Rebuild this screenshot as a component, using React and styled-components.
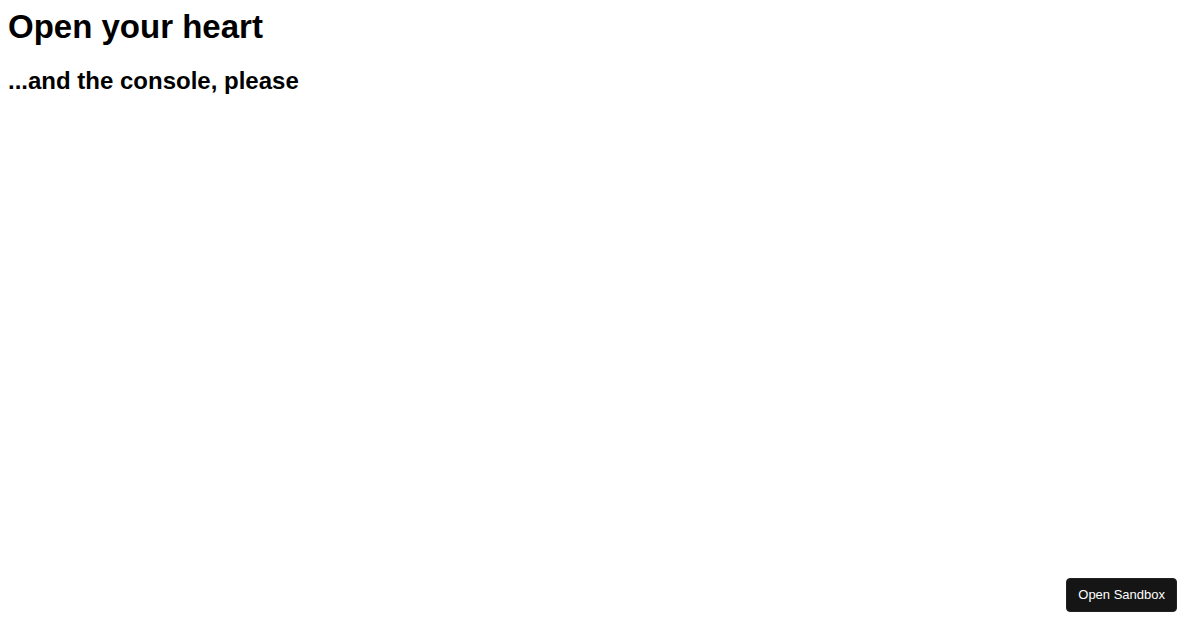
import React from 'react';
import styled, { createGlobalStyle } from 'styled-components';

const App = () => {
  return (
    <>
      <GlobalStyle />
      <main>
        <Title>Open your heart</Title>
        <Subtitle>...and the console, please</Subtitle>
      </main>
      <SandboxButton type="button">Open Sandbox</SandboxButton>
    </>
  );
};

const GlobalStyle = createGlobalStyle`
  body {
    margin: 8px;
    background: #fff;
    color: #000;
    font-family: "Liberation Sans", Arial, sans-serif;
  }
`;

const Title = styled.h1`
  margin: 0 0 20px;
  font-size: 33px;
  line-height: 37px;
`;

const Subtitle = styled.h2`
  margin: 0;
  font-size: 24px;
  line-height: 32px;
`;

const SandboxButton = styled.button`
  position: fixed;
  right: 23px;
  bottom: 18px;
  padding: 8px 11px;
  border: 1px solid #222;
  border-radius: 4px;
  background: #151515;
  color: #fff;
  font-family: "Liberation Sans", Arial, sans-serif;
  font-size: 13px;
  line-height: 16px;
  cursor: pointer;
`;

export default App;
